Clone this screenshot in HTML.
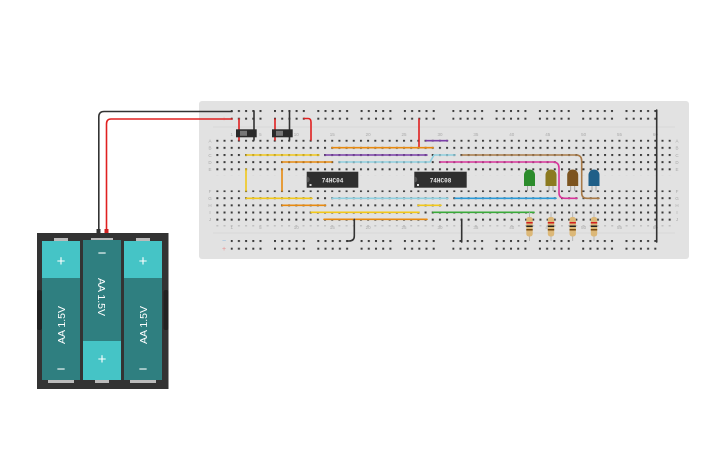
<!DOCTYPE html>
<html><head><meta charset="utf-8"><style>
html,body{margin:0;padding:0;background:#fff;width:725px;height:453px;overflow:hidden}
svg{display:block}
</style></head><body>
<svg width="725" height="453" viewBox="0 0 725 453" xmlns="http://www.w3.org/2000/svg" font-family="Liberation Sans, sans-serif">
<defs>
<pattern id="th" x="230.7" y="139.7" width="7.18" height="7.15" patternUnits="userSpaceOnUse"><rect width="2" height="2" fill="#3a3a3a"/></pattern>
<pattern id="rl" x="230.7" y="110" width="43.3" height="7.7" patternUnits="userSpaceOnUse">
<rect x="0" width="2" height="2" fill="#3a3a3a"/><rect x="7.2" width="2" height="2" fill="#3a3a3a"/><rect x="14.4" width="2" height="2" fill="#3a3a3a"/><rect x="21.6" width="2" height="2" fill="#3a3a3a"/><rect x="28.8" width="2" height="2" fill="#3a3a3a"/></pattern>
<pattern id="rr" x="452.3" y="110" width="43.3" height="7.7" patternUnits="userSpaceOnUse">
<rect x="0" width="2" height="2" fill="#3a3a3a"/><rect x="7.2" width="2" height="2" fill="#3a3a3a"/><rect x="14.4" width="2" height="2" fill="#3a3a3a"/><rect x="21.6" width="2" height="2" fill="#3a3a3a"/><rect x="28.8" width="2" height="2" fill="#3a3a3a"/></pattern>
<pattern id="rlb" x="230.7" y="240" width="43.3" height="7.7" patternUnits="userSpaceOnUse">
<rect x="0" width="2" height="2" fill="#3a3a3a"/><rect x="7.2" width="2" height="2" fill="#3a3a3a"/><rect x="14.4" width="2" height="2" fill="#3a3a3a"/><rect x="21.6" width="2" height="2" fill="#3a3a3a"/><rect x="28.8" width="2" height="2" fill="#3a3a3a"/></pattern>
<pattern id="rrb" x="452.3" y="240" width="43.3" height="7.7" patternUnits="userSpaceOnUse">
<rect x="0" width="2" height="2" fill="#3a3a3a"/><rect x="7.2" width="2" height="2" fill="#3a3a3a"/><rect x="14.4" width="2" height="2" fill="#3a3a3a"/><rect x="21.6" width="2" height="2" fill="#3a3a3a"/><rect x="28.8" width="2" height="2" fill="#3a3a3a"/></pattern>
</defs>

<rect x="199" y="101" width="490" height="158" rx="3" fill="#e2e2e2"/>
<line x1="213" y1="127" x2="675" y2="127" stroke="#d4d4d4" stroke-width="0.7"/>
<line x1="213" y1="233" x2="675" y2="233" stroke="#d4d4d4" stroke-width="0.7"/>
<rect x="230.7" y="110" width="216" height="10" fill="url(#rl)"/>
<rect x="452.3" y="110" width="216" height="10" fill="url(#rr)"/>
<rect x="230.7" y="240" width="216" height="10" fill="url(#rlb)"/>
<rect x="452.3" y="240" width="216" height="10" fill="url(#rrb)"/>
<rect x="216" y="139.7" width="458" height="35.7" fill="url(#th)"/>
<rect x="216" y="190.1" width="458" height="35.7" transform="translate(0,0.3)" fill="url(#th)"/>

<g font-size="4.5" fill="#a8a8a8" text-anchor="middle">
<text x="231.7" y="136">1</text><text x="260.4" y="136">5</text><text x="296.3" y="136">10</text><text x="332.2" y="136">15</text><text x="368.1" y="136">20</text><text x="404" y="136">25</text><text x="440" y="136">30</text><text x="475.9" y="136">35</text><text x="511.8" y="136">40</text><text x="547.7" y="136">45</text><text x="583.6" y="136">50</text><text x="619.5" y="136">55</text><text x="655.4" y="136">60</text>
<text x="231.7" y="229">1</text><text x="260.4" y="229">5</text><text x="296.3" y="229">10</text><text x="332.2" y="229">15</text><text x="368.1" y="229">20</text><text x="404" y="229">25</text><text x="440" y="229">30</text><text x="475.9" y="229">35</text><text x="511.8" y="229">40</text><text x="547.7" y="229">45</text><text x="583.6" y="229">50</text><text x="619.5" y="229">55</text><text x="655.4" y="229">60</text>
<text x="210" y="142.5">A</text><text x="210" y="149.5">B</text><text x="210" y="156.8">C</text><text x="210" y="163.8">D</text><text x="210" y="171">E</text><text x="210" y="192.8">F</text><text x="210" y="199.8">G</text><text x="210" y="207">H</text><text x="210" y="214">I</text><text x="210" y="221">J</text>
<text x="677" y="142.5">A</text><text x="677" y="149.5">B</text><text x="677" y="156.8">C</text><text x="677" y="163.8">D</text><text x="677" y="171">E</text><text x="677" y="192.8">F</text><text x="677" y="199.8">G</text><text x="677" y="207">H</text><text x="677" y="214">I</text><text x="677" y="221">J</text>
</g>
<text x="224" y="243" font-size="7" fill="#8ab8e0" text-anchor="middle">−</text>
<text x="224" y="251" font-size="7" fill="#e89090" text-anchor="middle">+</text>
<text x="224" y="121" font-size="7" fill="#e8b0b0" text-anchor="middle">+</text>

<g fill="none" stroke-width="1.6" stroke-linecap="round">
<path d="M98.8,231 V117 Q98.8,111.5 104,111.5 H232" stroke="#333"/>
<path d="M106.5,231 V124 Q106.5,119 111,119 H232" stroke="#e02020"/>
<path d="M239,119 V140" stroke="#e02020"/>
<path d="M254,111 V140" stroke="#333"/>
<path d="M275,119 V140" stroke="#e02020"/>
<path d="M289.5,111 V140" stroke="#333"/>
<path d="M304,118.5 H308 Q311,118.5 311,122 V140" stroke="#e02020"/>
<path d="M419,119 V147" stroke="#e02020"/>
<path d="M426,140.7 H447.5" stroke="#7b3fa8"/>
<path d="M332,147.7 H433" stroke="#e88a10"/>
<path d="M246,155 H319" stroke="#f2c81a"/>
<path d="M325,155 H427" stroke="#7b3fa8"/>
<path d="M339,162 H430 L434,155 H455" stroke="#8fd0e0"/>
<path d="M440,162 H553 Q559,162 559,168 V193 Q559,198.3 565,198.3 H577" stroke="#d8359a"/>
<path d="M462,155 H576 Q581.7,155 581.7,161 V193 Q581.7,198.3 587,198.3 H599" stroke="#a87a48"/>
<path d="M282,162 H332" stroke="#e88a10"/>
<path d="M246,169 V191" stroke="#f2c81a"/>
<path d="M282,169 V191" stroke="#e88a10"/>
<path d="M246,198.3 H312" stroke="#f2c81a"/>
<path d="M332,198.3 H448" stroke="#8fd0e0"/>
<path d="M455,198.3 H556" stroke="#2a9ad8"/>
<path d="M282,205.3 H325.5" stroke="#e88a10"/>
<path d="M418,205.3 H441" stroke="#f2c81a"/>
<path d="M311,212.3 H419" stroke="#f2c81a"/>
<path d="M433,212.3 H534" stroke="#3aaa3a"/>
<path d="M324,219.3 H427" stroke="#e88a10"/>
<path d="M354.3,219.3 V236 Q354.3,241 349,241 H347" stroke="#333"/>
<path d="M461.7,219.3 V242" stroke="#333"/>
<path d="M656.7,110 V242" stroke="#333"/>
</g>

<rect x="236" y="129.3" width="20.7" height="8" fill="#2a2a2a"/>
<rect x="240" y="130.8" width="7" height="5" fill="#777"/>
<rect x="272" y="129.3" width="20.7" height="8" fill="#2a2a2a"/>
<rect x="276" y="130.8" width="7" height="5" fill="#777"/>

<rect x="306.7" y="171.7" width="51.6" height="16" fill="#2f2f2f"/>
<path d="M306.7,176.5 a3,3 0 0 1 0,6" fill="#555"/>
<rect x="309.5" y="184" width="2" height="2" fill="#ddd"/>
<text x="332.5" y="182.3" font-family="Liberation Mono, monospace" font-size="6" font-weight="bold" fill="#e8e8e8" text-anchor="middle">74HC04</text>
<rect x="414.3" y="171.7" width="52.4" height="16" fill="#2f2f2f"/>
<path d="M414.3,176.5 a3,3 0 0 1 0,6" fill="#555"/>
<rect x="417" y="184" width="2" height="2" fill="#ddd"/>
<text x="440.5" y="182.3" font-family="Liberation Mono, monospace" font-size="6" font-weight="bold" fill="#e8e8e8" text-anchor="middle">74HC08</text>

<g stroke="#999" stroke-width="0.8">
<path d="M527.5,185 V191 M531.5,185 V191 M549,185 V191 M553,185 V191 M570.7,185 V191 M574.7,185 V191 M592,185 V191 M596,185 V191"/>
</g>
<path d="M524,186 V175 a5.5,5.5 0 0 1 11,0 V186 Z" fill="#2c8c2c"/>
<path d="M545.5,186 V175 a5.5,5.5 0 0 1 11,0 V186 Z" fill="#8c7a20"/>
<path d="M567.2,186 V175 a5.5,5.5 0 0 1 11,0 V186 Z" fill="#7c5420"/>
<path d="M588.5,186 V175 a5.5,5.5 0 0 1 11,0 V186 Z" fill="#1f5f88"/>

<g>
<g transform="translate(529.5,0)"><line x1="0" y1="212" x2="0" y2="241" stroke="#aaa" stroke-width="0.8"/><rect x="-3.2" y="217" width="6.4" height="19.5" rx="2.5" fill="#dcb878"/><rect x="-3.2" y="222" width="6.4" height="1.5" fill="#d02020"/><rect x="-3.2" y="225.5" width="6.4" height="1.5" fill="#222"/><rect x="-3.2" y="229" width="6.4" height="1.5" fill="#7a4a10"/></g>
<g transform="translate(551,0)"><line x1="0" y1="212" x2="0" y2="241" stroke="#aaa" stroke-width="0.8"/><rect x="-3.2" y="217" width="6.4" height="19.5" rx="2.5" fill="#dcb878"/><rect x="-3.2" y="222" width="6.4" height="1.5" fill="#d02020"/><rect x="-3.2" y="225.5" width="6.4" height="1.5" fill="#222"/><rect x="-3.2" y="229" width="6.4" height="1.5" fill="#7a4a10"/></g>
<g transform="translate(572.7,0)"><line x1="0" y1="212" x2="0" y2="241" stroke="#aaa" stroke-width="0.8"/><rect x="-3.2" y="217" width="6.4" height="19.5" rx="2.5" fill="#dcb878"/><rect x="-3.2" y="222" width="6.4" height="1.5" fill="#d02020"/><rect x="-3.2" y="225.5" width="6.4" height="1.5" fill="#222"/><rect x="-3.2" y="229" width="6.4" height="1.5" fill="#7a4a10"/></g>
<g transform="translate(594,0)"><line x1="0" y1="212" x2="0" y2="241" stroke="#aaa" stroke-width="0.8"/><rect x="-3.2" y="217" width="6.4" height="19.5" rx="2.5" fill="#dcb878"/><rect x="-3.2" y="222" width="6.4" height="1.5" fill="#d02020"/><rect x="-3.2" y="225.5" width="6.4" height="1.5" fill="#222"/><rect x="-3.2" y="229" width="6.4" height="1.5" fill="#7a4a10"/></g>
</g>

<rect x="37" y="233" width="131.5" height="156" fill="#333"/>
<rect x="37" y="290" width="5" height="40" rx="2" fill="#222"/>
<rect x="163.5" y="290" width="5" height="40" rx="2" fill="#222"/>
<rect x="96.5" y="229" width="4" height="4" fill="#333"/>
<rect x="104.5" y="229" width="4" height="4" fill="#d02020"/>
<g fill="#bbb">
<rect x="54" y="238" width="14" height="3"/><rect x="91" y="238" width="22" height="3"/><rect x="136" y="238" width="14" height="3"/>
<rect x="48" y="380" width="26" height="3"/><rect x="95" y="380" width="14" height="3"/><rect x="130" y="380" width="26" height="3"/>
</g>
<rect x="42" y="241" width="38" height="139" fill="#2f7f80"/>
<rect x="42" y="241" width="38" height="37" fill="#45c4c6"/>
<text x="61" y="266" font-size="15" fill="#fff" text-anchor="middle">+</text>
<text x="61" y="374" font-size="15" fill="#fff" text-anchor="middle">−</text>
<text transform="translate(65,325) rotate(-90)" font-size="10.5" fill="#fff" text-anchor="middle">AA 1.5V</text>
<rect x="83" y="240" width="38" height="140" fill="#2f7f80"/>
<rect x="83" y="341" width="38" height="39" fill="#45c4c6"/>
<text x="102" y="364" font-size="15" fill="#fff" text-anchor="middle">+</text>
<text x="102" y="258" font-size="15" fill="#fff" text-anchor="middle">−</text>
<text transform="translate(98,297) rotate(90)" font-size="10.5" fill="#fff" text-anchor="middle">AA 1.5V</text>
<rect x="124" y="241" width="38" height="139" fill="#2f7f80"/>
<rect x="124" y="241" width="38" height="37" fill="#45c4c6"/>
<text x="143" y="266" font-size="15" fill="#fff" text-anchor="middle">+</text>
<text x="143" y="374" font-size="15" fill="#fff" text-anchor="middle">−</text>
<text transform="translate(147,325) rotate(-90)" font-size="10.5" fill="#fff" text-anchor="middle">AA 1.5V</text>
</svg>
</body></html>
